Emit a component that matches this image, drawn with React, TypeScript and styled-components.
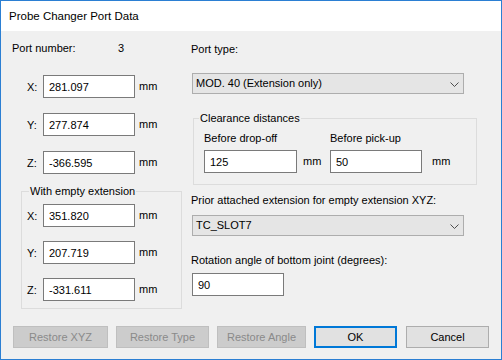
import styled, { createGlobalStyle } from 'styled-components';

const GlobalStyle = createGlobalStyle`
  html, body {
    margin: 0;
    padding: 0;
    background: #ffffff;
  }
  * {
    box-sizing: border-box;
  }
`;

const coordsTop = [
    { axis: 'X', value: '281.097' },
    { axis: 'Y', value: '277.874' },
    { axis: 'Z', value: '-366.595' },
];

const coordsEmpty = [
    { axis: 'X', value: '351.820' },
    { axis: 'Y', value: '207.719' },
    { axis: 'Z', value: '-331.611' },
];

const Chevron = () => (
    <svg width="9" height="5" viewBox="0 0 9 5">
        <polyline points="0.5,0.5 4.5,4.5 8.5,0.5" fill="none" stroke="#4d4d4d" strokeWidth="1"/>
    </svg>
);

const CoordRow = ({ axis, value }: { axis: string; value: string }) => (
    <StyledCoordRow>
        <AxisLabel>{axis}:</AxisLabel>
        <TextBox $width={92} defaultValue={value}/>
        <Unit>mm</Unit>
    </StyledCoordRow>
);

const App = () => {
    return (
        <>
            <GlobalStyle/>
            <Window>
                <TitleBar>Probe Changer Port Data</TitleBar>
                <Body>
                    <Columns>
                        <LeftColumn>
                            <PortNumber>
                                <span>Port number:</span>
                                <span>3</span>
                            </PortNumber>
                            <CoordList $indent={15}>
                                {coordsTop.map((c) => (
                                    <CoordRow key={c.axis} axis={c.axis} value={c.value}/>
                                ))}
                            </CoordList>
                            <EmptyGroup>
                                <Legend $shift={2}>With empty extension</Legend>
                                <CoordList $indent={0} $gap={14}>
                                    {coordsEmpty.map((c) => (
                                        <CoordRow key={c.axis} axis={c.axis} value={c.value}/>
                                    ))}
                                </CoordList>
                            </EmptyGroup>
                        </LeftColumn>

                        <RightColumn>
                            <Label $top={1}>Port type:</Label>
                            <Combo $top={16}>
                                <span>MOD. 40 (Extension only)</span>
                                <Chevron/>
                            </Combo>

                            <ClearanceGroup>
                                <Legend $shift={-5}>Clearance distances</Legend>
                                <ClearanceGrid>
                                    <Field>
                                        <Label>Before drop-off</Label>
                                        <FieldRow>
                                            <TextBox $width={93} defaultValue="125"/>
                                            <Unit>mm</Unit>
                                        </FieldRow>
                                    </Field>
                                    <Field>
                                        <Label>Before pick-up</Label>
                                        <FieldRow>
                                            <TextBox $width={92} defaultValue="50"/>
                                            <Unit $gap={8}>mm</Unit>
                                        </FieldRow>
                                    </Field>
                                </ClearanceGrid>
                            </ClearanceGroup>

                            <Label $top={8}>Prior attached extension for empty extension XYZ:</Label>
                            <Combo $top={7}>
                                <span>TC_SLOT7</span>
                                <Chevron/>
                            </Combo>

                            <Label $top={17}>Rotation angle of bottom joint (degrees):</Label>
                            <AngleBox $width={92} defaultValue="90"/>
                        </RightColumn>
                    </Columns>

                    <Footer>
                        <DialogButton $width={95} disabled>Restore XYZ</DialogButton>
                        <DialogButton $width={93} disabled>Restore Type</DialogButton>
                        <DialogButton $width={89} disabled>Restore Angle</DialogButton>
                        <DialogButton $width={83} $primary>OK</DialogButton>
                        <DialogButton $width={83} $gapLeft={9}>Cancel</DialogButton>
                    </Footer>
                </Body>
            </Window>
        </>
    );
};

const Window = styled.div`
  width: 502px;
  height: 360px;
  border: 1px solid #2b7fd3;
  background: #f0f0f0;
  display: flex;
  flex-direction: column;
  font-family: "Liberation Sans", Arial, sans-serif;
  font-size: 11px;
  color: #000000;
`;

const TitleBar = styled.div`
  height: 30px;
  background: #ffffff;
  display: flex;
  align-items: center;
  padding-left: 8px;
  padding-bottom: 1px;
  font-size: 11.5px;
`;

const Body = styled.div`
  flex: 1;
  padding: 10px 0 0 11px;
  display: flex;
  flex-direction: column;
`;

const Columns = styled.div`
  display: flex;
  gap: 9px;
  align-items: flex-start;
`;

const LeftColumn = styled.div`
  width: 170px;
  display: flex;
  flex-direction: column;
`;

const RightColumn = styled.div`
  width: 286px;
  display: flex;
  flex-direction: column;
  align-items: flex-start;
`;

const PortNumber = styled.div`
  display: grid;
  grid-template-columns: 106px auto;
  line-height: 15px;
`;

const CoordList = styled.div<{ $indent: number; $gap?: number }>`
  display: flex;
  flex-direction: column;
  gap: ${(p) => p.$gap ?? 15}px;
  margin-left: ${(p) => p.$indent}px;
  margin-top: ${(p) => (p.$indent ? 19 : 0)}px;
`;

const StyledCoordRow = styled.div`
  display: grid;
  grid-template-columns: 16px 92px auto;
  align-items: center;
  height: 23px;
`;

const AxisLabel = styled.span`
  line-height: 15px;
  padding-top: 1px;
`;

const TextBox = styled.input<{ $width: number }>`
  width: ${(p) => p.$width}px;
  height: 23px;
  margin: 0;
  border: 1px solid #7a7a7a;
  background: #ffffff;
  padding: 0 5px;
  font-family: inherit;
  font-size: 11px;
  color: #000000;
  outline: none;
`;

const AngleBox = styled(TextBox)`
  margin-top: 5px;
  margin-left: 1px;
`;

const Unit = styled.span<{ $gap?: number }>`
  margin-left: ${(p) => p.$gap ?? 4}px;
  line-height: 15px;
`;

const GroupBox = styled.fieldset`
  margin: 0;
  min-width: 0;
  border: 1px solid #dcdcdc;
`;

const EmptyGroup = styled(GroupBox)`
  margin: 10px 0 0 9px;
  width: 161px;
  padding: 5px 5px 7px 5px;
`;

const ClearanceGroup = styled(GroupBox)`
  margin: 17px 0 0 2px;
  width: 284px;
  padding: 5px 10px 11px 10px;
`;

const Legend = styled.legend<{ $shift: number }>`
  margin-left: ${(p) => p.$shift}px;
  padding: 0 1px;
  line-height: 15px;
`;

const ClearanceGrid = styled.div`
  display: grid;
  grid-template-columns: 126px auto;
`;

const Field = styled.div`
  display: flex;
  flex-direction: column;
  gap: 4px;
`;

const FieldRow = styled.div`
  display: flex;
  align-items: center;
  gap: 2px;
`;

const Label = styled.div<{ $top?: number }>`
  margin-top: ${(p) => p.$top ?? 0}px;
  line-height: 15px;
  white-space: nowrap;
`;

const Combo = styled.div<{ $top: number }>`
  margin-top: ${(p) => p.$top}px;
  margin-left: 1px;
  width: 272px;
  height: 21px;
  border: 1px solid #adadad;
  background: #e5e5e5;
  display: flex;
  align-items: center;
  justify-content: space-between;
  padding: 0 3px 0 3px;
  line-height: 15px;

  svg {
    margin-top: 1px;
    margin-right: 1px;
  }
`;

const Footer = styled.div`
  display: flex;
  gap: 8px;
  margin: 17px 0 0 1px;
`;

const DialogButton = styled.button<{ $width: number; $primary?: boolean; $gapLeft?: number }>`
  width: ${(p) => p.$width}px;
  height: 22px;
  margin: 0 0 0 ${(p) => (p.$gapLeft ? p.$gapLeft - 8 : 0)}px;
  padding: 0;
  font-family: inherit;
  font-size: 11px;
  color: #000000;
  background: #e1e1e1;
  border: ${(p) => (p.$primary ? '2px solid #0078d7' : '1px solid #adadad')};

  &:disabled {
    background: #cccccc;
    border: 1px solid #bfbfbf;
    color: #8a8a8a;
  }
`;

export default App;
